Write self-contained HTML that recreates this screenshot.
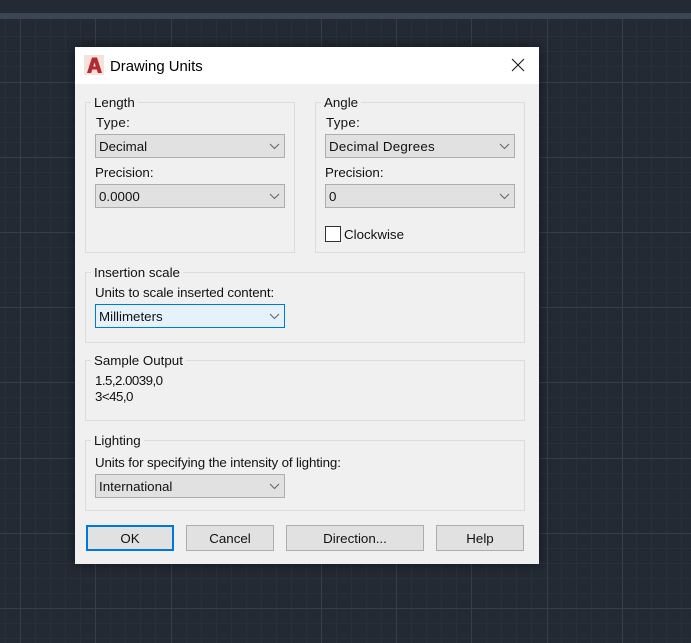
<!DOCTYPE html>
<html>
<head>
<meta charset="utf-8">
<style>
html,body{margin:0;padding:0}
body{width:691px;height:643px;position:relative;overflow:hidden;background:#232a34;font-family:"Liberation Sans",Arial,sans-serif;font-size:13.33px;color:#111}
#bg{position:absolute;left:0;top:0}
#dlg{position:absolute;left:75px;top:47px;width:464px;height:517px;background:#f0f0f0;box-shadow:0 0 12px rgba(0,0,0,.45)}
#tb{position:absolute;left:75px;top:47px;width:464px;height:37px;background:#fff}
.g{position:absolute;border:1px solid #dcdcdc;box-sizing:border-box}
.t{position:absolute;white-space:nowrap;line-height:18px}
.l{background:#f0f0f0;padding:0 3px 0 3px}
.s{position:absolute;box-sizing:border-box;height:24px;background:#e1e1e1;border:1px solid #adadad;line-height:24px;padding-left:3px;white-space:nowrap}
.s svg{position:absolute;right:4px;top:7px}
.b{position:absolute;top:525px;height:26px;box-sizing:border-box;background:#e1e1e1;border:1px solid #adadad;text-align:center;line-height:26px}
</style>
</head>
<body>
<svg id="bg" width="691" height="643" viewBox="0 0 691 643">
<rect width="691" height="643" fill="#232a34"/>
<rect y="13" width="691" height="6" fill="#3b4554"/>
<g stroke="#29303b" stroke-width="1" shape-rendering="crispEdges">
<path d="M5.5 19V643M35.5 19V643M50.5 19V643M65.5 19V643M80.5 19V643M110.5 19V643M125.5 19V643M140.5 19V643M155.5 19V643M186.5 19V643M201.5 19V643M216.5 19V643M231.5 19V643M246.5 19V643M261.5 19V643M276.5 19V643M291.5 19V643M306.5 19V643M336.5 19V643M351.5 19V643M366.5 19V643M381.5 19V643M411.5 19V643M426.5 19V643M441.5 19V643M456.5 19V643M486.5 19V643M501.5 19V643M516.5 19V643M531.5 19V643M561.5 19V643M576.5 19V643M591.5 19V643M606.5 19V643M636.5 19V643M651.5 19V643M666.5 19V643M681.5 19V643"/>
<path d="M0 36.5H691M0 51.5H691M0 66.5H691M0 97.5H691M0 112.5H691M0 127.5H691M0 142.5H691M0 172.5H691M0 187.5H691M0 202.5H691M0 217.5H691M0 247.5H691M0 262.5H691M0 277.5H691M0 292.5H691M0 322.5H691M0 337.5H691M0 352.5H691M0 367.5H691M0 397.5H691M0 412.5H691M0 427.5H691M0 443.5H691M0 473.5H691M0 488.5H691M0 503.5H691M0 518.5H691M0 548.5H691M0 563.5H691M0 578.5H691M0 593.5H691M0 623.5H691M0 638.5H691"/>
</g>
<g stroke="#363d4c" stroke-width="1" shape-rendering="crispEdges">
<path d="M20.5 19V643M95.5 19V643M171.5 19V643M321.5 19V643M396.5 19V643M471.5 19V643M547.5 19V643M622.5 19V643"/>
<path d="M0 82.5H691M0 157.5H691M0 232.5H691M0 307.5H691M0 382.5H691M0 458.5H691M0 533.5H691M0 608.5H691"/>
</g>
</svg>
<div id="dlg"></div>
<div id="tb"></div>
<svg style="position:absolute;left:84px;top:55px" width="20" height="20" viewBox="0 0 20 20">
<rect width="20" height="20" fill="#f7e2db"/>
<path d="M3 18 L8 2.5 H13 L18 18 H13.8 L12.8 14.5 H8.2 L7.2 18 Z M9.2 11.5 H11.8 L10.5 7.5 Z" fill="#b32a30" fill-rule="evenodd"/>
</svg>
<div class="t" style="left:110px;top:58px;font-size:14.9px;color:#000">Drawing Units</div>
<svg style="position:absolute;left:511px;top:58px" width="14" height="14" viewBox="0 0 14 14"><path d="M1 1L13 13M13 1L1 13" stroke="#111" stroke-width="1" fill="none"/></svg>

<div class="g" style="left:85px;top:102px;width:210px;height:151px"></div>
<div class="t l" style="left:91px;top:94px">Length</div>
<div class="t" style="left:96px;top:114px;letter-spacing:.3px">Type:</div>
<div class="s" style="left:95px;top:134px;width:190px">Decimal<svg width="12" height="8" viewBox="0 0 12 8"><path d="M2 2L6.5 6.5L11 2" fill="none" stroke="#666" stroke-width="1.1"/></svg></div>
<div class="t" style="left:95px;top:164px">Precision:</div>
<div class="s" style="left:95px;top:184px;width:190px">0.0000<svg width="12" height="8" viewBox="0 0 12 8"><path d="M2 2L6.5 6.5L11 2" fill="none" stroke="#666" stroke-width="1.1"/></svg></div>

<div class="g" style="left:315px;top:102px;width:210px;height:151px"></div>
<div class="t l" style="left:321px;top:94px">Angle</div>
<div class="t" style="left:326px;top:114px;letter-spacing:.3px">Type:</div>
<div class="s" style="left:325px;top:134px;width:190px;letter-spacing:.25px">Decimal Degrees<svg width="12" height="8" viewBox="0 0 12 8"><path d="M2 2L6.5 6.5L11 2" fill="none" stroke="#666" stroke-width="1.1"/></svg></div>
<div class="t" style="left:325px;top:164px">Precision:</div>
<div class="s" style="left:325px;top:184px;width:190px">0<svg width="12" height="8" viewBox="0 0 12 8"><path d="M2 2L6.5 6.5L11 2" fill="none" stroke="#666" stroke-width="1.1"/></svg></div>
<div style="position:absolute;left:325px;top:226px;width:16px;height:16px;box-sizing:border-box;background:#fff;border:1px solid #333"></div>
<div class="t" style="left:344px;top:226px">Clockwise</div>

<div class="g" style="left:85px;top:272px;width:440px;height:71px"></div>
<div class="t l" style="left:91px;top:264px">Insertion scale</div>
<div class="t" style="left:95px;top:284px;letter-spacing:-.1px">Units to scale inserted content:</div>
<div class="s" style="left:95px;top:304px;width:190px;background:#e5f1fb;border-color:#0078d7">Millimeters<svg width="12" height="8" viewBox="0 0 12 8"><path d="M2 2L6.5 6.5L11 2" fill="none" stroke="#666" stroke-width="1.1"/></svg></div>

<div class="g" style="left:85px;top:360px;width:440px;height:61px"></div>
<div class="t l" style="left:91px;top:352px">Sample Output</div>
<div class="t" style="left:95px;top:372px;letter-spacing:-.55px">1.5,2.0039,0</div>
<div class="t" style="left:95px;top:388px;letter-spacing:-.55px">3&lt;45,0</div>

<div class="g" style="left:85px;top:440px;width:440px;height:71px"></div>
<div class="t l" style="left:91px;top:432px">Lighting</div>
<div class="t" style="left:95px;top:454px;letter-spacing:-.13px">Units for specifying the intensity of lighting:</div>
<div class="s" style="left:95px;top:474px;width:190px">International<svg width="12" height="8" viewBox="0 0 12 8"><path d="M2 2L6.5 6.5L11 2" fill="none" stroke="#666" stroke-width="1.1"/></svg></div>

<div class="b" style="left:86px;width:88px;border:2px solid #0078d7;line-height:24px">OK</div>
<div class="b" style="left:186px;width:88px">Cancel</div>
<div class="b" style="left:286px;width:138px">Direction...</div>
<div class="b" style="left:436px;width:88px">Help</div>
</body>
</html>
